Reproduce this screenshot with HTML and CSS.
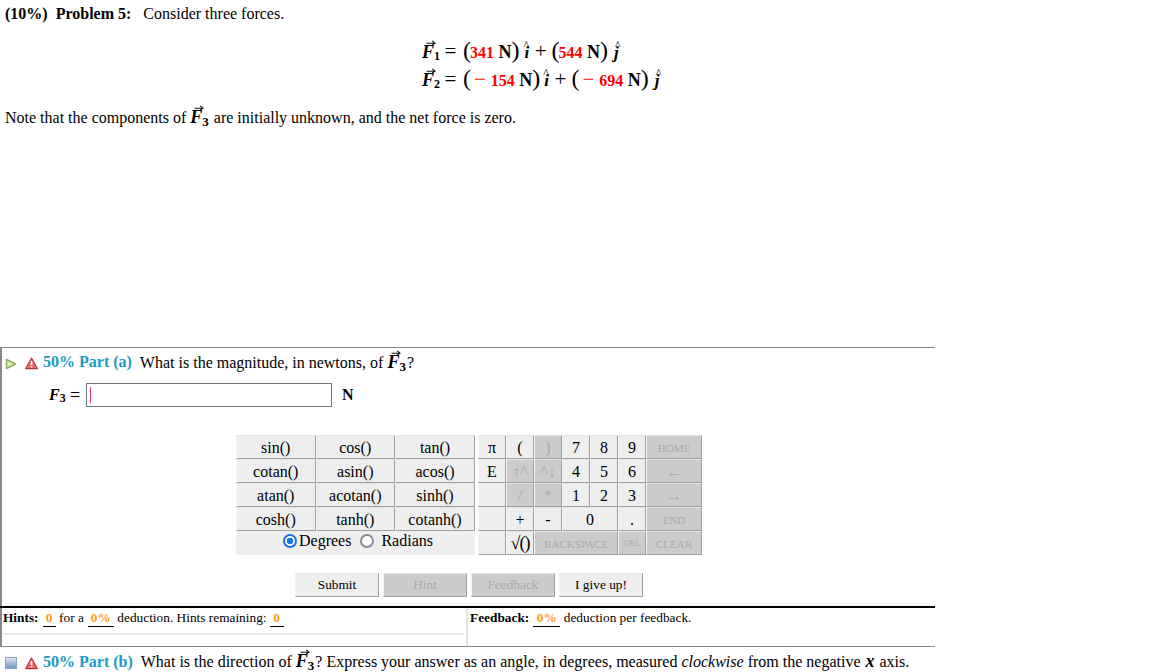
FILE: index.html
```html
<!DOCTYPE html>
<html lang="en">
<head>
<meta charset="utf-8">
<title>Problem 5</title>
<link rel="stylesheet" href="styles.css">
</head>
<body>
<svg class="defs" width="0" height="0" aria-hidden="true">
  <symbol id="warn" viewBox="0 0 13 13">
    <path d="M6.5 1 L12.3 11.6 H0.7 Z" fill="#e8686c" stroke="#b5343a" stroke-width="1.1" stroke-linejoin="round"/>
    <path d="M6.5 4 V8" stroke="#fff" stroke-width="1.6"/>
    <path d="M6.5 9 V10.6" stroke="#fff" stroke-width="1.6"/>
  </symbol>
  <symbol id="arrow" viewBox="0 0 10 6">
    <path d="M0.5 3.2 H8.5 M6.2 0.8 L9 3.2 L6.2 5" fill="none" stroke="#111" stroke-width="1.1"/>
  </symbol>
</svg>

<div class="problem">
  <p class="title"><b>(10%)&nbsp; Problem 5:</b>&nbsp;&nbsp; Consider three forces.</p>
  <div class="equations">
    <div class="eq"><span class="vec">F<svg class="arr"><use href="#arrow"/></svg></span><sub>1</sub><span class="rel">=</span><span class="par">(</span><span class="val">341</span><span class="unit-n">N</span><span class="par">)</span><span class="hat">i</span><span class="plus">+</span><span class="par">(</span><span class="val">544</span><span class="unit-n">N</span><span class="par">)</span><span class="hat hj">j</span></div>
    <div class="eq"><span class="vec">F<svg class="arr"><use href="#arrow"/></svg></span><sub>2</sub><span class="rel">=</span><span class="par">(</span><span class="minus">−</span><span class="val neg">154</span><span class="unit-n">N</span><span class="par">)</span><span class="hat h2">i</span><span class="plus">+</span><span class="par">(</span><span class="minus">−</span><span class="val neg">694</span><span class="unit-n">N</span><span class="par">)</span><span class="hat hj">j</span></div>
  </div>
  <p class="note">Note that the components of <span class="vec m">F<svg class="arr"><use href="#arrow"/></svg></span><sub class="msub">3</sub> are initially unknown, and the net force is zero.</p>
</div>

<section class="part">
  <div class="part-head">
    <svg class="ico-play" viewBox="0 0 12 12"><path d="M1.5 1.5 L10.5 6 L1.5 10.5 Z" fill="#dfeeb8" stroke="#8eb05a" stroke-width="1.5" stroke-linejoin="round"/></svg>
    <svg class="ico-warn"><use href="#warn"/></svg>
    <span class="pct">50% Part (a)</span>
    <span class="q">What is the magnitude, in newtons, of <span class="vec m">F<svg class="arr"><use href="#arrow"/></svg></span><sub class="msub">3</sub>?</span>
  </div>

  <div class="answer">
    <span class="ans-label"><i>F</i><sub>3</sub></span><span class="ans-eq">=</span>
    <div class="input"><span class="caret"></span></div>
    <b class="unit">N</b>
  </div>

  <div class="calc">
    <div class="funcs">
      <div class="key">sin()</div><div class="key">cos()</div><div class="key">tan()</div>
      <div class="key">cotan()</div><div class="key">asin()</div><div class="key">acos()</div>
      <div class="key">atan()</div><div class="key">acotan()</div><div class="key">sinh()</div>
      <div class="key">cosh()</div><div class="key">tanh()</div><div class="key">cotanh()</div>
      <div class="modes">
        <span class="radio on"></span><span class="mode-a">Degrees</span>
        <span class="radio"></span><span class="mode-b">Radians</span>
      </div>
    </div>
    <div class="pad">
      <div class="key">π</div><div class="key">(</div><div class="key off">)</div><div class="key">7</div><div class="key">8</div><div class="key">9</div><div class="key off small">HOME</div>
      <div class="key">E</div><div class="key off">↑^</div><div class="key off">^↓</div><div class="key">4</div><div class="key">5</div><div class="key">6</div><div class="key off">←</div>
      <div class="key"></div><div class="key off">/</div><div class="key off">*</div><div class="key">1</div><div class="key">2</div><div class="key">3</div><div class="key off">→</div>
      <div class="key"></div><div class="key">+</div><div class="key">-</div><div class="key w2">0</div><div class="key">.</div><div class="key off small">END</div>
      <div class="key"></div><div class="key sqrt">√()</div><div class="key off w3 small">BACKSPACE</div><div class="key off tiny">DEL</div><div class="key off small">CLEAR</div>
    </div>
  </div>

  <div class="actions">
    <div class="btn">Submit</div>
    <div class="btn off">Hint</div>
    <div class="btn off">Feedback</div>
    <div class="btn">I give up!</div>
  </div>

  <div class="info">
    <div class="hints">
      <div class="info-line"><b>Hints:</b><span class="blank w-a">0</span>for a<span class="blank w-b">0%</span>deduction. Hints remaining:<span class="blank w-d">0</span></div>
      <div class="rule"></div>
    </div>
    <div class="feedback">
      <div class="info-line"><b>Feedback:</b><span class="blank w-c">0%</span>deduction per feedback.</div>
    </div>
  </div>
</section>

<div class="part-next">
  <svg class="ico-box" viewBox="0 0 12 12"><defs><linearGradient id="bx" x1="0" y1="0" x2="0" y2="1"><stop offset="0" stop-color="#dfe7f3"/><stop offset="1" stop-color="#6f94c8"/></linearGradient></defs><rect x="0.5" y="0.5" width="11" height="11" fill="url(#bx)" stroke="#8ea4c4"/></svg>
  <svg class="ico-warn"><use href="#warn"/></svg>
  <span class="pct">50% Part (b)</span>
  <span class="q">What is the direction of <span class="vec m">F<svg class="arr"><use href="#arrow"/></svg></span><sub class="msub">3</sub>? Express your answer as an angle, in degrees, measured <i>clockwise</i> from the negative <b class="mx"><i>x</i></b> axis.</span>
</div>
</body>
</html>
```
FILE: styles.css
```css
* { box-sizing: border-box; }
html, body { margin: 0; padding: 0; }
body {
  width: 1152px;
  height: 672px;
  overflow: hidden;
  background: #fff;
  color: #000;
  font-family: "Liberation Serif", "Times New Roman", serif;
  font-size: 16px;
}
.defs { position: absolute; }
p { margin: 0; }

.problem { height: 347px; padding: 5px 0 0 5px; }
.title { height: 18px; line-height: 18px; }

.equations { margin: 14px 0 0 417px; font-weight: bold; font-size: 16px; }
.eq { display: flex; align-items: baseline; height: 28px; line-height: 28px; white-space: pre; }
.eq .vec { font-size: 18px; }
.eq sub { font-size: 12px; font-weight: bold; vertical-align: baseline; position: relative; top: 2px; width: 6px; }
.rel { width: 13px; margin: 0 6px 0 4px; font-weight: normal; font-size: 21px; text-align: center; }
.plus { margin: 0 5px 0 5.5px; font-weight: normal; font-size: 21px; }
.par { font-size: 24px; font-weight: normal; line-height: 20px; }
.val { color: #f00; margin-left: -1px; }
.minus { color: #f00; font-weight: normal; font-size: 21px; margin: 0 0 0 3px; }
.val.neg { margin-left: 5px; }
.unit-n { margin: 0 0 0 4.5px; font-size: 18px; }
.hat { position: relative; font-style: italic; margin-left: 5px; font-size: 17px; }
.hat.h2 { margin-left: 4px; }
.hat.hj { margin-left: 6px; }
.hat::before {
  content: "^";
  position: absolute;
  left: -1px;
  top: -8px;
  font-size: 12px;
  font-weight: normal;
  font-style: normal;
}
.hat.hj::before { left: 1px; }

.vec { position: relative; display: inline-block; font-style: italic; font-weight: bold; line-height: 1; }
.vec.m { font-size: 18px; }
.arr { position: absolute; left: 4px; top: -3px; width: 10px; height: 6px; }
.msub { font-size: 13px; font-weight: bold; vertical-align: baseline; position: relative; top: 3px; line-height: 0; margin-right: 1px; }
.mx { font-size: 18px; margin: 0 1px; }

.note { margin-top: 15px; height: 20px; line-height: 20px; }

.part {
  width: 935px;
  height: 300px;
  border-top: 1px solid #888;
  border-left: 2px solid #888;
  border-bottom: 1px solid #888;
}
.part-head { display: flex; align-items: center; height: 28px; padding-left: 3px; white-space: pre; margin-top: 0; }
.ico-play { width: 12px; height: 12px; margin-right: 8px; margin-top: 3px; }
.ico-warn { width: 13px; height: 13px; margin-right: 5px; margin-top: 3px; }
.pct { color: #199cc4; font-weight: bold; margin-right: 8px; }

.answer { display: flex; align-items: center; height: 24px; margin-top: 7px; padding-left: 47px; }
.ans-label { width: 20px; font-weight: bold; font-style: italic; }
.ans-label sub { font-size: 12px; font-style: normal; vertical-align: baseline; position: relative; top: 2px; line-height: 0; }
.ans-eq { width: 10px; margin: 0 6px 0 1px; font-size: 18px; text-align: center; }
.input { width: 246px; height: 24px; border: 1px solid #767676; padding: 3px 0 0 3px; }
.caret { display: block; width: 1px; height: 16px; background: #e4406a; }
.unit { margin-left: 10px; }

.calc { display: flex; margin: 28px 0 0 234px; }
.funcs { display: grid; grid-template-columns: 79.5px 79.5px 80px; grid-template-rows: repeat(4, 24px) 24px; width: 239px; background: #eee; }
.pad { display: grid; grid-template-columns: repeat(6, 28px) 56px; grid-auto-rows: 24px; margin-left: 3px; }
.key {
  display: flex;
  align-items: center;
  justify-content: center;
  padding-top: 1px;
  background: #eee;
  border-top: 1px solid #e4e4e4;
  border-left: 1px solid #f4f4f4;
  border-right: 1px solid #a0a0a0;
  border-bottom: 1px solid #a0a0a0;
  white-space: pre;
}
.key.off { background: #ccc; color: #aaa; }
.small { font-size: 11px; }
.key.tiny { font-size: 8px; }
.w2 { grid-column: span 2; }
.w3 { grid-column: span 3; }
.sqrt { font-size: 18px; letter-spacing: -1px; }
.modes { grid-column: 1 / -1; display: flex; align-items: center; padding-left: 47px; padding-bottom: 5px; }
.radio { width: 14px; height: 14px; border-radius: 50%; border: 2px solid #8a8a96; background: #fff; margin-top: 1px; }
.radio.on { border-color: #1a73e8; background: radial-gradient(circle, #1a73e8 0 3px, #fff 3.6px); }
.mode-a { margin: 0 9px 0 2px; }
.mode-b { margin-left: 7px; }

.actions { display: flex; gap: 4px; margin: 18px 0 0 293px; font-size: 13.33px; }
.btn {
  width: 84px;
  height: 24px;
  display: flex;
  align-items: center;
  justify-content: center;
  background: #eee;
  border-top: 1px solid #e2e2e2;
  border-left: 1px solid #f4f4f4;
  border-right: 1px solid #a0a0a0;
  border-bottom: 1px solid #a0a0a0;
}
.btn.off { background: #ccc; color: #aaa; }

.info { display: flex; height: 40px; margin: 9px 0 0 -2px; border-top: 2px solid #000; font-size: 13.33px; }
.hints { width: 468px; border-right: 2px solid #e2e2e2; padding: 0 0 0 3px; }
.feedback { flex: 1; padding-left: 2px; }
.info-line { display: flex; height: 24px; align-items: flex-start; line-height: 20px; white-space: pre; }
.blank {
  color: #ff9c1a;
  font-weight: bold;
  border-bottom: 1px solid #000;
  text-align: center;
  margin: 0 3.5px 0 4px;
  height: 19px;
}
.w-a { width: 13px; }
.w-b { width: 26px; }
.w-c { width: 27px; }
.w-d { width: 14px; margin-left: 3px; }
.rule { height: 2px; background: #e8e8e8; margin: 1px 2px 0 0; }

.part-next { display: flex; align-items: center; height: 25px; padding: 4px 0 0 5px; white-space: pre; }
.part-next .ico-warn { margin-left: 8px; margin-right: 5px; }
.ico-box { width: 12px; height: 12px; margin-top: 3px; }
```
